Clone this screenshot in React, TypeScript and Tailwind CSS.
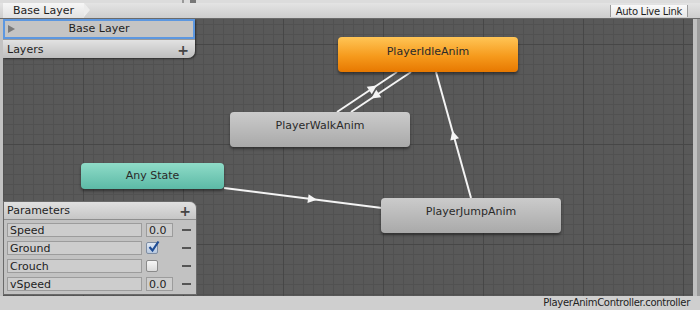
import React from "react";

type ArrowProps = { x1: number; y1: number; x2: number; y2: number; t: number };

function Transition({ x1, y1, x2, y2, t }: ArrowProps) {
  const dx = x2 - x1;
  const dy = y2 - y1;
  const len = Math.sqrt(dx * dx + dy * dy);
  const ux = dx / len;
  const uy = dy / len;
  const nx = -uy;
  const ny = ux;
  const cx = x1 + dx * t;
  const cy = y1 + dy * t;
  const s = 4.5;
  const pts = [
    [cx + ux * s, cy + uy * s],
    [cx - ux * s + nx * s, cy - uy * s + ny * s],
    [cx - ux * s - nx * s, cy - uy * s - ny * s],
  ]
    .map((p) => p.join(","))
    .join(" ");
  return (
    <g>
      <line x1={x1} y1={y1} x2={x2} y2={y2} stroke="#f4f4f4" strokeWidth={2} />
      <polygon points={pts} fill="#f4f4f4" />
    </g>
  );
}

function Node({
  label,
  className,
}: {
  label: string;
  className: string;
}) {
  return (
    <div
      className={`absolute flex items-center justify-center rounded-[4px] text-[11px] text-[#2a2a2a] shadow-[0_2px_3px_rgba(0,0,0,0.45)] ${className}`}
    >
      {label}
    </div>
  );
}

function Minus() {
  return <div className="mx-auto h-[2px] w-[9px] bg-[#555]" />;
}

export default function App() {
  return (
    <div className="flex h-[310px] w-[700px] flex-col overflow-hidden bg-[#c4c4c4] font-['DejaVu_Sans','Liberation_Sans',sans-serif] text-[11px] text-[#1e1e1e]">
      {/* thin strip above */}
      <div className="flex h-[3px] bg-[#dcdcdc]">
        <div className="w-[182px]" />
        <div className="h-[3px] w-[2px] bg-[#999]" />
        <div className="ml-[6px] h-[3px] w-[6px] bg-[#777]" />
      </div>
      {/* toolbar */}
      <div className="flex h-[16px] items-stretch border-b border-[#6a6a6a] bg-[linear-gradient(#e4e4e4,#cdcdcd)]">
        <div className="relative ml-[3px] flex items-center bg-[linear-gradient(#f6f6f6,#e2e2e2)] pl-[10px] pr-[10px] pt-[1px] text-[11px]">
          Base Layer
          <div className="absolute right-[-6px] top-0 h-0 w-0 border-y-[7.5px] border-l-[6px] border-y-transparent border-l-[#ececec]" />
        </div>
        <div className="flex-1" />
        <div className="mr-[12px] mt-[2px] mb-[1px] flex items-center border-x border-[#9a9a9a] bg-[linear-gradient(#fafafa,#e8e8e8)] px-[5px] pt-[1px] text-[10px] tracking-[-0.3px]">
          Auto Live Link
        </div>
      </div>
      {/* main */}
      <div className="flex h-[277px]">
        <div className="w-[3px] bg-[#c2c2c2]" />
        <div className="relative flex-1 overflow-hidden bg-[#595959] [background-image:linear-gradient(to_right,#474747_1px,transparent_1px),linear-gradient(to_bottom,#474747_1px,transparent_1px),linear-gradient(to_right,#515151_1px,transparent_1px),linear-gradient(to_bottom,#515151_1px,transparent_1px)] [background-size:100px_100px,100px_100px,10px_10px,10px_10px] [background-position:80px_0,0_25px,0_0,0_5px]">
          <svg
            className="absolute left-0 top-0"
            width={690}
            height={277}
            viewBox="3 19 690 277"
          >
            <Transition x1={337} y1={112} x2={397} y2={72} t={0.6} />
            <Transition x1={411} y1={72} x2={351} y2={112} t={0.6} />
            <Transition x1={471} y1={198} x2={436} y2={72} t={0.5} />
            <Transition x1={224} y1={188} x2={382} y2={208} t={0.56} />
          </svg>

          <Node
            label="PlayerIdleAnim"
            className="left-[335px] top-[18px] h-[35px] w-[180px] pb-[5px] bg-[linear-gradient(#ffc556,#f69a1c_55%,#e77800)]"
          />
          <Node
            label="PlayerWalkAnim"
            className="left-[227px] top-[93px] h-[35px] w-[180px] pb-[6px] bg-[linear-gradient(#cbcbcb,#a9a9a9)]"
          />
          <Node
            label="Any State"
            className="left-[78px] top-[144px] h-[26px] w-[143px] bg-[linear-gradient(#8fdcc8,#5cb9a6)]"
          />
          <Node
            label="PlayerJumpAnim"
            className="left-[378px] top-[179px] h-[35px] w-[180px] pb-[6px] bg-[linear-gradient(#cbcbcb,#a9a9a9)]"
          />

          {/* Layers panel */}
          <div className="absolute left-0 top-0 w-[192px] rounded-br-[7px] shadow-[1px_1px_2px_rgba(0,0,0,0.5)]">
            <div className="relative flex h-[20px] items-center justify-center border-2 border-[#5c97e0] bg-[#c4c4c4] text-[11px]">
              <div className="absolute left-[3px] top-[4px] h-0 w-0 border-y-[4.5px] border-l-[7px] border-y-transparent border-l-[#7a7a7a]" />
              Base Layer
            </div>
            <div className="flex h-[19px] items-center justify-between rounded-br-[7px] border-t border-[#9a9a9a] bg-[linear-gradient(#e2e2e2,#bebebe)] pl-[4px] pr-[6px] pt-[2px] text-[11px]">
              <span>Layers</span>
              <span className="text-[14px] font-bold leading-none text-[#444]">+</span>
            </div>
          </div>

          {/* Parameters panel */}
          <div className="absolute bottom-[1px] left-0 h-[94px] w-[194px] rounded-tr-[7px] border border-[#6a6a6a] bg-[#c2c2c2]">
            <div className="flex h-[18px] items-center justify-between rounded-tr-[7px] border-b border-[#8e8e8e] bg-[linear-gradient(#e0e0e0,#c6c6c6)] pl-[3px] pr-[5px] pt-[1px] text-[11px]">
              <span>Parameters</span>
              <span className="text-[14px] font-bold leading-none text-[#444]">+</span>
            </div>
            <div className="grid grid-cols-[135px_27px_1fr] gap-x-[4px] gap-y-[4px] pl-[3px] pt-[3px]">
              {/* Speed */}
              <div className="flex h-[14px] items-center border border-[#9c9c9c] bg-[#cdcdcd] pl-[2px] text-[11px] leading-none">Speed</div>
              <div className="flex h-[14px] items-center border border-[#9c9c9c] bg-[#cdcdcd] pl-[2px] text-[11px] leading-none">0.0</div>
              <div className="flex items-center"><Minus /></div>
              {/* Ground */}
              <div className="flex h-[14px] items-center border border-[#9c9c9c] bg-[#cdcdcd] pl-[2px] text-[11px] leading-none">Ground</div>
              <div className="flex items-center">
                <div className="relative h-[12px] w-[12px] rounded-[2px] border border-[#7f8ea3] bg-[linear-gradient(#dfe8f4,#b8c8de)]">
                  <svg className="absolute left-[0px] top-[-3px]" width={13} height={13} viewBox="0 0 13 13">
                    <path d="M2.5 7 L5.5 10.5 L11.5 1.5" stroke="#1f4d96" strokeWidth={2.2} fill="none" />
                  </svg>
                </div>
              </div>
              <div className="flex items-center"><Minus /></div>
              {/* Crouch */}
              <div className="flex h-[14px] items-center border border-[#9c9c9c] bg-[#cdcdcd] pl-[2px] text-[11px] leading-none">Crouch</div>
              <div className="flex items-center">
                <div className="h-[12px] w-[12px] rounded-[2px] border border-[#8a8a8a] bg-[linear-gradient(#f6f6f6,#dadada)]" />
              </div>
              <div className="flex items-center"><Minus /></div>
              {/* vSpeed */}
              <div className="flex h-[14px] items-center border border-[#9c9c9c] bg-[#cdcdcd] pl-[2px] text-[11px] leading-none">vSpeed</div>
              <div className="flex h-[14px] items-center border border-[#9c9c9c] bg-[#cdcdcd] pl-[2px] text-[11px] leading-none">0.0</div>
              <div className="flex items-center"><Minus /></div>
            </div>
          </div>
        </div>
        <div className="w-[4px] bg-[#c0c0c0]" />
        <div className="w-[3px] bg-[#9c9c9c]" />
      </div>
      {/* status bar */}
      <div className="flex h-[14px] items-center justify-end bg-[#cfcfcf] pr-[10px] text-[10px] leading-none tracking-[-0.3px] text-[#222]">
        PlayerAnimController.controller
      </div>
    </div>
  );
}
